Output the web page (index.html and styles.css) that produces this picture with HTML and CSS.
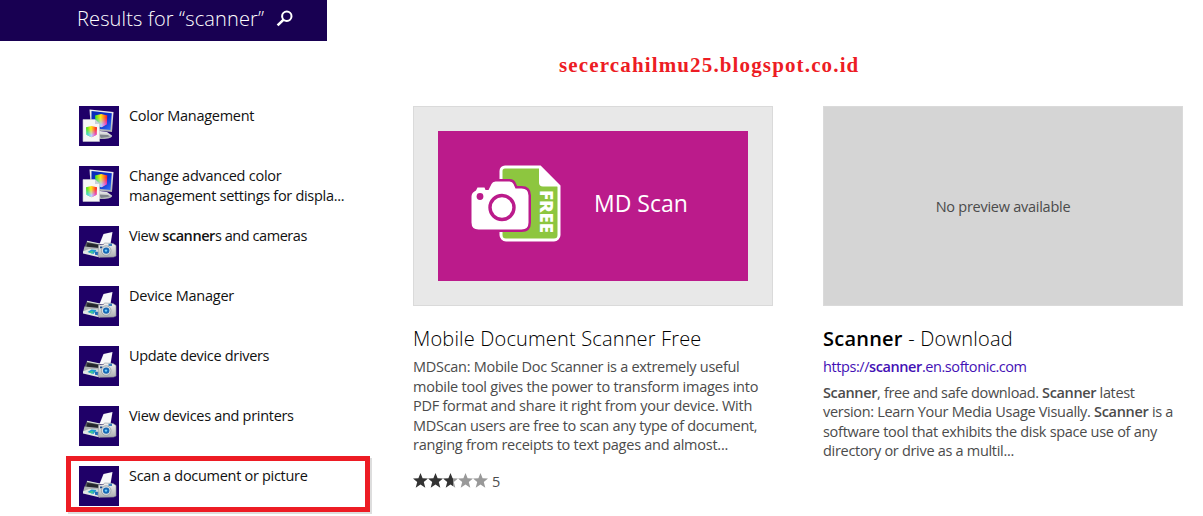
FILE: index.html
```
<!DOCTYPE html>
<html lang="en">
<head>
<meta charset="utf-8">
<title>Results for “scanner”</title>
<link rel="stylesheet" href="styles.css">
</head>
<body>
<svg class="defs" width="0" height="0" aria-hidden="true">
  <defs>
    <linearGradient id="hue-top"><stop offset="0" stop-color="#3d2"/><stop offset=".45" stop-color="#fe1"/><stop offset=".7" stop-color="#f82"/><stop offset="1" stop-color="#f12"/></linearGradient>
    <linearGradient id="hue-low"><stop offset="0" stop-color="#1dd"/><stop offset=".5" stop-color="#bcf"/><stop offset="1" stop-color="#e2c"/></linearGradient>
    <linearGradient id="fade" x2="0" y2="1"><stop offset=".25" stop-color="#000"/><stop offset=".8" stop-color="#fff"/></linearGradient>
    <mask id="lower" maskContentUnits="objectBoundingBox"><path d="M0 0h1v1H0z" fill="url(#fade)"/></mask>
    <linearGradient id="screen" x1="0" x2="1" y1="0" y2="1"><stop offset="0" stop-color="#0a2bb0"/><stop offset=".6" stop-color="#0a32d8"/><stop offset="1" stop-color="#3a7af5"/></linearGradient>
    <linearGradient id="metal" x1="0" x2="0" y1="0" y2="1"><stop offset="0" stop-color="#f4f4f2"/><stop offset="1" stop-color="#a9adb0"/></linearGradient>
    <symbol id="cube" viewBox="0 0 12 12" preserveAspectRatio="none">
      <path d="M0 1.300 6 0l6 1.300-.6 7.700L6 12 .6 9z" fill="url(#hue-top)"/>
      <path d="M0 1.300 6 0l6 1.300-.6 7.700L6 12 .6 9z" fill="url(#hue-low)" mask="url(#lower)"/>
    </symbol>
    <symbol id="color" viewBox="0 0 40 40">
      <path d="M10.500 3.500 34.500 6 33 26 12 24z" fill="url(#metal)"/>
      <path d="M12.500 5 32.800 7.300 31.500 24 12.500 22z" fill="url(#screen)"/>
      <path d="M17 24.500 28 26 33 29.500c1 2-5 4-12 3.500l-5-1z" fill="url(#metal)"/>
      <path d="M20 28.500l9 .5 2 1.500-9 1.500z" fill="#7f858c"/>
      <use href="#cube" x="16" y="8" width="12.500" height="13.500"/>
      <path d="M4 13.500h12l4.500 4.500v17.500H4z" fill="#f7f7f7" stroke="#c4c4cc" stroke-width=".6"/>
      <path d="M16 13.500V18h4.500z" fill="#cbd0d8"/>
      <use href="#cube" x="7" y="20" width="11" height="11.500"/>
    </symbol>
    <symbol id="device" viewBox="0 0 40 40">
      <path d="M8 15 20 17.500v4L5.500 21z" fill="#55595e"/>
      <path d="M8 15.300 21 18" stroke="#d9dddd" stroke-width="1.200"/>
      <path d="M8.500 17 20 19v3L7.500 21z" fill="#25272c"/>
      <path d="M24.500 8 33.500 6 31.500 18 20.500 18z" fill="#f8f9fb"/>
      <path d="M5.500 20.500 20 22v4L4 26z" fill="#aeb3b4"/>
      <path d="M4 25.500l6-2.500 11 .5v8L4 27.500z" fill="#e2e5e4"/>
      <path d="M8.500 26l4-2.500 5 .5-3 4z" fill="#1f9bd0"/>
      <path d="M10 26.300l3-1.300 2 1-2.500 1.500z" fill="#45c98b"/>
      <path d="M16 25.500l4 .5v3.500l-4-.7z" fill="#246ab8"/>
      <path d="M19.500 19l5-.5 1-1.500 8.500.5 3 2v10.500l-2.500 1-14 .3-1.500-1z" fill="url(#metal)" stroke="#8c9399" stroke-width=".6"/>
      <path d="M29.500 17.800h3.500v2.200h-3.500z" fill="#3a83c0"/>
      <path d="M21 20.500h2.500v1.800H21z" fill="#1b4d8a"/>
      <circle cx="27.200" cy="24.600" r="4.800" fill="#d8dde0" stroke="#8a939b" stroke-width=".7"/>
      <circle cx="27.200" cy="24.600" r="3.200" fill="#1769b5"/>
      <circle cx="27" cy="24.600" r="1.200" fill="#73d2ff"/>
    </symbol>
    <symbol id="star" viewBox="0 0 15 15"><path d="M7.500 0 9.600 5.300 15 5.500 10.800 9l1.500 5.700-4.800-3.200-4.800 3.200L4.200 9 0 5.500l5.400-.2z"/></symbol>
  </defs>
</svg>

<header class="top">
  <div class="banner">
    <h1 class="heading"><span class="t t-head">Results for “scanner”</span></h1>
    <svg class="search" width="18" height="18" viewBox="0 0 18 18"><circle cx="10.800" cy="6.200" r="4.700" fill="none" stroke="#fff" stroke-width="2"/><path d="M7.600 9.600 1.600 15.400" stroke="#fff" stroke-width="2.600"/></svg>
  </div>
  <div class="watermark"><span class="t t-mark">secercahilmu25.blogspot.co.id</span></div>
</header>

<main class="content">
  <ul class="list">
    <li class="item"><svg class="icon"><use href="#color"/></svg><div><span class="t l1">Color Management</span></div></li>
    <li class="item"><svg class="icon"><use href="#color"/></svg><div><span class="t l2">Change advanced color</span><span class="t l3">management settings for displa...</span></div></li>
    <li class="item"><svg class="icon"><use href="#device"/></svg><div><span class="t l4">View <b>scanner</b>s and cameras</span></div></li>
    <li class="item"><svg class="icon"><use href="#device"/></svg><div><span class="t l5">Device Manager</span></div></li>
    <li class="item"><svg class="icon"><use href="#device"/></svg><div><span class="t l6">Update device drivers</span></div></li>
    <li class="item"><svg class="icon"><use href="#device"/></svg><div><span class="t l7">View devices and printers</span></div></li>
    <li class="item marked"><svg class="icon"><use href="#device"/></svg><div><span class="t l8">Scan a document or picture</span></div></li>
  </ul>

  <article class="card">
    <div class="preview app">
      <div class="tile">
        <svg class="logo" width="92" height="80" viewBox="0 0 92 80">
          <path d="M35 3h35l19 19v49a5 5 0 0 1-5 5H36a5 5 0 0 1-5-5V7a4 4 0 0 1 4-4z" fill="#8dc63f" stroke="#fff" stroke-width="3"/>
          <path d="M69 2 90 22.500H73a4 4 0 0 1-4-4z" fill="#fff"/>
          <path d="M6 26.500l1.500-3h7l1 2.500h3l3-6q1-2.500 4-2.500h14q3 0 4 2.500l2 4.500h6q7 0 7 7v27q0 7-7 7h-43q-7 0-7-7v-26q0-4 4.500-6z" fill="#fff" stroke="#bb1b8b" stroke-width="5" paint-order="stroke"/>
          <circle cx="32" cy="43.500" r="12" fill="#fff" stroke="#bb1b8b" stroke-width="3.400"/>
          <circle cx="10" cy="32.500" r="3.400" fill="#bb1b8b"/>
          <text class="free" transform="translate(70 26) rotate(90)" textLength="43" lengthAdjust="spacingAndGlyphs">FREE</text>
        </svg>
        <span class="t t-md">MD Scan</span>
      </div>
    </div>
    <h2 class="title"><span class="t t-a">Mobile Document Scanner Free</span></h2>
    <p class="body">
      <span class="t a1">MDScan: Mobile Doc Scanner is a extremely useful</span>
      <span class="t a2">mobile tool gives the power to transform images into</span>
      <span class="t a3">PDF format and share it right from your device. With</span>
      <span class="t a4">MDScan users are free to scan any type of document,</span>
      <span class="t a5">ranging from receipts to text pages and almost...</span>
    </p>
    <div class="rating">
      <svg width="75" height="15" viewBox="0 0 75 15">
        <defs><linearGradient id="part"><stop offset=".65" stop-color="#333"/><stop offset=".65" stop-color="#999"/></linearGradient></defs>
        <use href="#star" width="15" height="15" fill="#333"/><use href="#star" x="15" width="15" height="15" fill="#333"/><use href="#star" x="30" width="15" height="15" fill="url(#part)"/><use href="#star" x="45" width="15" height="15" fill="#999"/><use href="#star" x="60" width="15" height="15" fill="#999"/>
      </svg>
      <span>5</span>
    </div>
  </article>

  <article class="card">
    <div class="preview empty"><span class="t t-no">No preview available</span></div>
    <h2 class="title"><span class="t t-b"><b>Scanner</b> - Download</span></h2>
    <a class="link"><span class="t t-url">https://<b>scanner</b>.en.softonic.com</span></a>
    <p class="body">
      <span class="t b1"><b>Scanner</b>, free and safe download. <b>Scanner</b> latest</span>
      <span class="t b2">version: Learn Your Media Usage Visually. <b>Scanner</b> is a</span>
      <span class="t b3">software tool that exhibits the disk space use of any</span>
      <span class="t b4">directory or drive as a multil...</span>
    </p>
  </article>
</main>
</body>
</html>
```
FILE: styles.css
```
*, *::after { box-sizing: border-box; }
body { margin: 0; width: 1203px; height: 516px; overflow: hidden; background: #fff; color: #111; font: 14.5px/19.6px "Open Sans", "Noto Sans", sans-serif; }
.defs { position: absolute; }
.t { display: block; width: max-content; white-space: nowrap; }
b { font-weight: 600; }
.top { display: flex; height: 106px; }
.banner { display: flex; width: 327px; height: 41px; padding: 0 0 0 77px; background: #180052; color: #fff; }
.heading { width: 199px; margin: 0; font-size: 20px; line-height: 38px; font-weight: 300; }
.search { margin-top: 10px; }
.watermark { padding: 53px 0 0 232px; color: #ed1c24; font: bold 21px/24px "Liberation Serif", serif; }
.content { display: flex; padding-left: 79px; }
.list { flex: none; width: 334px; margin: 0; padding: 0; list-style: none; }
.item { position: relative; display: flex; gap: 10px; height: 60px; }
.icon { width: 40px; height: 40px; background: #1f0068; }
.marked::after { content: ""; position: absolute; left: -13px; top: -10px; width: 304px; height: 56px; border: 5px solid #ed1c24; box-shadow: 2px 2px 0 #ddd; }
.card { flex: none; width: 360px; margin-right: 50px; color: #4b4b4b; }
.preview { display: flex; height: 200px; border: 1px solid #dadada; }
.app { padding: 24px; background: #e8e8e8; }
.tile { display: flex; width: 310px; height: 150px; background: #bb1b8b; color: #fff; padding: 33px 0 0 32px; }
.logo { flex: none; }
.free { font: 800 18px "Open Sans", sans-serif; fill: #fff; }
.t-md { margin: 23px 0 0 32px; font-size: 23px; line-height: 32px; }
.empty { align-items: center; justify-content: center; padding-top: 2px; background: #d5d5d5; }
.title { margin: 18px 0 0; color: #000; font-size: 20px; line-height: 30px; font-weight: 300; }
.body { margin: 3px 0 0; }
.rating { display: flex; gap: 4px; margin-top: 17px; }
.rating svg { margin-top: 1px; }
.link { display: block; margin: 3px 0 6px; color: #4310b5; }

/* Tracking per line */
.t-head { letter-spacing: .14px; }
.t-mark { letter-spacing: 1.14px; }
.l1 { letter-spacing: -.28px; }
.l2 { letter-spacing: -.24px; }
.l3 { letter-spacing: -.3px; }
.l4 { letter-spacing: -.44px; }
.l5 { letter-spacing: -.24px; }
.l6 { letter-spacing: -.32px; }
.l7 { letter-spacing: -.3px; }
.l8 { letter-spacing: -.3px; }
.t-a { letter-spacing: .16px; }
.a1 { letter-spacing: -.285px; }
.a2 { letter-spacing: -.25px; }
.a3 { letter-spacing: -.26px; }
.a4 { letter-spacing: -.31px; }
.a5 { letter-spacing: -.25px; }
.t-no { letter-spacing: -.26px; }
.t-b { letter-spacing: .23px; }
.t-url { letter-spacing: -.42px; }
.b1 { letter-spacing: -.36px; }
.b2 { letter-spacing: -.31px; }
.b3 { letter-spacing: -.29px; }
.b4 { letter-spacing: -.3px; }
```
